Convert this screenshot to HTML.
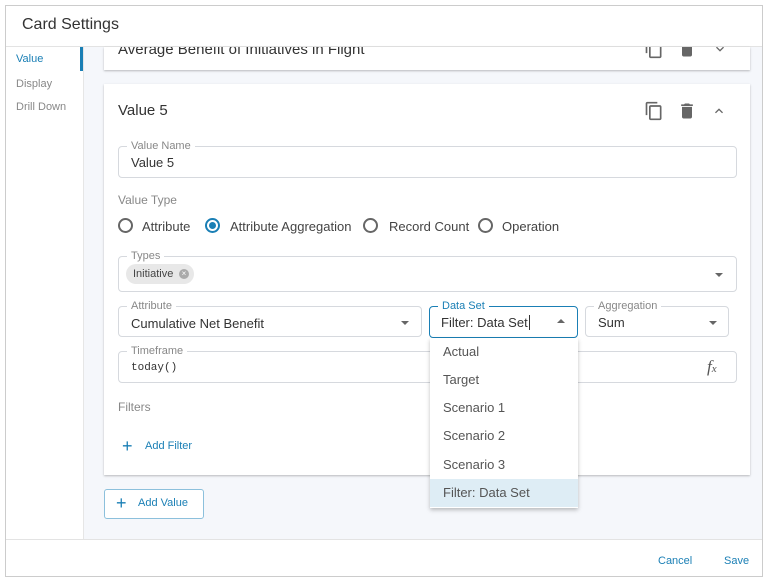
<!DOCTYPE html>
<html><head><style>
*{box-sizing:border-box;margin:0;padding:0}
body{width:768px;height:582px;background:#fff;font-family:"Liberation Sans",sans-serif;color:#333;position:relative;overflow:hidden}
.a{position:absolute}
.fld{position:absolute;border:1px solid #d6d9de;border-radius:4px;background:#fff}
.lbl{position:absolute;top:-7px;left:8px;background:#fff;padding:0 4px;font-size:11px;color:#888;line-height:12px}
.val{position:absolute;left:12px;font-size:13px;color:#333}
.car{position:absolute;width:0;height:0;border-left:4px solid transparent;border-right:4px solid transparent;border-top:4px solid #666}
.radio{position:absolute;width:15px;height:15px;border:2px solid #666;border-radius:50%}
.rl{position:absolute;font-size:13px;color:#444}
.mi{position:absolute;left:0;width:148px;height:28px;font-size:13px;color:#555;padding-left:13px;line-height:28px}
</style></head><body>
<div class="a" style="left:5px;top:5px;width:758px;height:572px;border:1px solid #ccc;background:#fff"></div>
<div class="a" style="left:22px;top:16px;font-size:16px;color:#333">Card Settings</div>
<div class="a" style="left:6px;top:46px;width:756px;height:1px;background:#e3e3e3"></div>
<!-- sidebar -->
<div class="a" style="left:83px;top:47px;width:1px;height:492px;background:#e6e6e6"></div>
<div class="a" style="left:80px;top:47px;width:3px;height:24px;background:#1a7fb5"></div>
<div class="a" style="left:16px;top:53px;font-size:11px;color:#1a7fb5">Value</div>
<div class="a" style="left:16px;top:78px;font-size:11px;color:#888">Display</div>
<div class="a" style="left:16px;top:101px;font-size:11px;color:#888">Drill Down</div>
<!-- content bg -->
<div class="a" style="left:84px;top:47px;width:678px;height:492px;background:#f5f7fb"></div>
<!-- card 1 -->
<div class="a" style="left:104px;top:47px;width:646px;height:23px;background:#fff;box-shadow:0 1px 2px rgba(0,0,0,.25);overflow:hidden">
<div class="a" style="left:14px;top:-6px;font-size:15px;color:#333">Average Benefit of Initiatives in Flight</div>
<svg class="a" style="left:540px;top:-8px" width="20" height="20" viewBox="0 0 24 24"><path fill="#666" d="M16 1H4c-1.1 0-2 .9-2 2v14h2V3h12V1zm3 4H8c-1.1 0-2 .9-2 2v14c0 1.1.9 2 2 2h11c1.1 0 2-.9 2-2V7c0-1.1-.9-2-2-2zm0 16H8V7h11v14z"/></svg>
<svg class="a" style="left:573px;top:-8px" width="20" height="20" viewBox="0 0 24 24"><path fill="#666" d="M6 19c0 1.1.9 2 2 2h8c1.1 0 2-.9 2-2V7H6v12zM19 4h-3.5l-1-1h-5l-1 1H5v2h14V4z"/></svg>
<svg class="a" style="left:608px;top:-6px" width="16" height="16" viewBox="0 0 24 24"><path fill="#666" d="M7.4 8.6 12 13.2l4.6-4.6L18 10l-6 6-6-6z"/></svg>
</div>
<!-- card 2 -->
<div class="a" style="left:104px;top:84px;width:646px;height:391px;background:#fff;box-shadow:0 1px 2px rgba(0,0,0,.25)"></div>
<div class="a" style="left:118px;top:102px;font-size:15px;color:#333">Value 5</div>
<svg class="a" style="left:644px;top:101px" width="20" height="20" viewBox="0 0 24 24"><path fill="#666" d="M16 1H4c-1.1 0-2 .9-2 2v14h2V3h12V1zm3 4H8c-1.1 0-2 .9-2 2v14c0 1.1.9 2 2 2h11c1.1 0 2-.9 2-2V7c0-1.1-.9-2-2-2zm0 16H8V7h11v14z"/></svg>
<svg class="a" style="left:677px;top:101px" width="20" height="20" viewBox="0 0 24 24"><path fill="#666" d="M6 19c0 1.1.9 2 2 2h8c1.1 0 2-.9 2-2V7H6v12zM19 4h-3.5l-1-1h-5l-1 1H5v2h14V4z"/></svg>
<svg class="a" style="left:711px;top:103px" width="16" height="16" viewBox="0 0 24 24"><path fill="#666" d="M7.4 15.4 12 10.8l4.6 4.6L18 14l-6-6-6 6z"/></svg>
<!-- Value name -->
<div class="fld" style="left:118px;top:146px;width:619px;height:32px"><div class="lbl">Value Name</div><div class="val" style="top:8px">Value 5</div></div>
<div class="a" style="left:118px;top:193px;font-size:12px;color:#888">Value Type</div>
<div class="radio" style="left:118px;top:218px"></div><div class="rl" style="left:142px;top:219px">Attribute</div>
<div class="radio" style="left:205px;top:218px;border-color:#1a7fb5"><div class="a" style="left:2px;top:2px;width:7px;height:7px;border-radius:50%;background:#1a7fb5"></div></div><div class="rl" style="left:230px;top:219px">Attribute Aggregation</div>
<div class="radio" style="left:363px;top:218px"></div><div class="rl" style="left:389px;top:219px">Record Count</div>
<div class="radio" style="left:478px;top:218px"></div><div class="rl" style="left:502px;top:219px">Operation</div>
<!-- types -->
<div class="fld" style="left:118px;top:256px;width:619px;height:36px"><div class="lbl">Types</div>
<div class="a" style="left:7px;top:7px;height:20px;width:68px;border-radius:10px;background:#e8e8e8;font-size:11px;color:#444;padding-left:7px;line-height:20px">Initiative<span class="a" style="right:5px;top:5px;width:10px;height:10px;border-radius:50%;background:#aaa;color:#fff;font-size:8px;line-height:10px;text-align:center">×</span></div>
<div class="car" style="left:596px;top:16px"></div></div>
<!-- attribute -->
<div class="fld" style="left:118px;top:306px;width:304px;height:31px"><div class="lbl">Attribute</div><div class="val" style="top:9px">Cumulative Net Benefit</div><div class="car" style="left:282px;top:14px"></div></div>
<div class="fld" style="left:429px;top:306px;width:149px;height:32px;border:1.5px solid #1a7fb5"><div class="lbl" style="color:#1a7fb5">Data Set</div><div class="val" style="top:8px;left:11px">Filter: Data Set<span style="border-left:1px solid #333;margin-left:1px"></span></div><div class="car" style="left:127px;top:12px;border-top:none;border-bottom:4px solid #666"></div></div>
<div class="fld" style="left:585px;top:306px;width:144px;height:31px"><div class="lbl">Aggregation</div><div class="val" style="top:8px">Sum</div><div class="car" style="left:123px;top:14px"></div></div>
<!-- timeframe -->
<div class="fld" style="left:118px;top:351px;width:619px;height:32px"><div class="lbl">Timeframe</div><div class="val" style="top:10px;font-family:'Liberation Mono',monospace;font-size:11px">today()</div><div class="a" style="left:588px;top:5px;font-family:'Liberation Serif',serif;font-style:italic;font-size:17px;color:#555">f<span style="font-size:11px">x</span></div></div>
<div class="a" style="left:118px;top:400px;font-size:12px;color:#888">Filters</div>
<div class="a" style="left:122px;top:436px;font-size:18px;color:#1a7fb5;line-height:20px">+</div>
<div class="a" style="left:145px;top:440px;font-size:11px;color:#1a7fb5">Add Filter</div>
<!-- add value -->
<div class="a" style="left:104px;top:489px;width:100px;height:30px;border:1px solid #8cc0dc;border-radius:3px;background:#fff"></div>
<div class="a" style="left:116px;top:493px;font-size:18px;color:#1a7fb5;line-height:20px">+</div>
<div class="a" style="left:138px;top:497px;font-size:11px;color:#1a7fb5">Add Value</div>
<!-- dropdown -->
<div class="a" style="left:430px;top:338px;width:148px;height:170px;background:#fff;box-shadow:0 2px 4px rgba(0,0,0,.25)">
<div class="mi" style="top:0">Actual</div>
<div class="mi" style="top:28px">Target</div>
<div class="mi" style="top:56px">Scenario 1</div>
<div class="mi" style="top:84px">Scenario 2</div>
<div class="mi" style="top:113px">Scenario 3</div>
<div class="mi" style="top:141px;background:#deedf5">Filter: Data Set</div>
</div>
<!-- footer -->
<div class="a" style="left:6px;top:539px;width:756px;height:1px;background:#e3e3e3"></div>
<div class="a" style="left:658px;top:555px;font-size:11px;color:#1a7fb5">Cancel</div>
<div class="a" style="left:724px;top:555px;font-size:11px;color:#1a7fb5">Save</div>
</body></html>
